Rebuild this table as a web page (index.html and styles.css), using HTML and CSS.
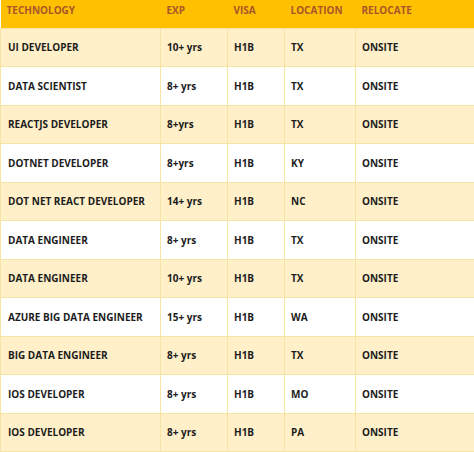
FILE: index.html
```html
<!DOCTYPE html>
<html>
<head>
<meta charset="utf-8">
<link rel="stylesheet" href="styles.css">
</head>
<body>
<table class="jobs">
  <colgroup>
    <col class="c-tech"><col class="c-exp"><col class="c-visa"><col class="c-loc"><col class="c-rel">
  </colgroup>
  <thead>
    <tr><th>TECHNOLOGY</th><th>EXP</th><th>VISA</th><th>LOCATION</th><th>RELOCATE</th></tr>
  </thead>
  <tbody>
    <tr><td>UI DEVELOPER</td><td>10+ yrs</td><td>H1B</td><td>TX</td><td>ONSITE</td></tr>
    <tr><td>DATA SCIENTIST</td><td>8+ yrs</td><td>H1B</td><td>TX</td><td>ONSITE</td></tr>
    <tr><td>REACTJS DEVELOPER</td><td>8+yrs</td><td>H1B</td><td>TX</td><td>ONSITE</td></tr>
    <tr><td>DOTNET DEVELOPER</td><td>8+yrs</td><td>H1B</td><td>KY</td><td>ONSITE</td></tr>
    <tr><td>DOT NET REACT DEVELOPER</td><td>14+ yrs</td><td>H1B</td><td>NC</td><td>ONSITE</td></tr>
    <tr><td>DATA ENGINEER</td><td>8+ yrs</td><td>H1B</td><td>TX</td><td>ONSITE</td></tr>
    <tr><td>DATA ENGINEER</td><td>10+ yrs</td><td>H1B</td><td>TX</td><td>ONSITE</td></tr>
    <tr><td>AZURE BIG DATA ENGINEER</td><td>15+ yrs</td><td>H1B</td><td>WA</td><td>ONSITE</td></tr>
    <tr><td>BIG DATA ENGINEER</td><td>8+ yrs</td><td>H1B</td><td>TX</td><td>ONSITE</td></tr>
    <tr><td>IOS DEVELOPER</td><td>8+ yrs</td><td>H1B</td><td>MO</td><td>ONSITE</td></tr>
    <tr><td>IOS DEVELOPER</td><td>8+ yrs</td><td>H1B</td><td>PA</td><td>ONSITE</td></tr>
  </tbody>
</table>
</body>
</html>
```

FILE: styles.css
```css
html, body {
  margin: 0;
  padding: 0;
  background: #ffffff;
}

.jobs {
  width: 474px;
  border-collapse: collapse;
  table-layout: fixed;
  font-family: "Open Sans", "Liberation Sans", sans-serif;
  font-weight: 700;
  font-size: 10px;
  color: #1c1c1c;
}

.c-tech { width: 160px; }
.c-exp { width: 67px; }
.c-visa { width: 57px; }
.c-loc { width: 71px; }
.c-rel { width: 119px; }

.jobs th {
  background: #ffc000;
  color: #a8562a;
  text-align: left;
  vertical-align: top;
  height: 28px;
  box-sizing: border-box;
  padding: 3px 0 0 6px;
  font-weight: 700;
  border: none;
}

.jobs td {
  height: 38.5px;
  box-sizing: border-box;
  padding: 0 0 0 6px;
  vertical-align: middle;
  white-space: nowrap;
  border: 1px solid #f6e3a6;
}

.jobs td:first-child { padding-left: 7px; }
.jobs td:last-child { border-right: none; }

.jobs tbody tr:nth-child(odd) td { background: #fff0c9; }
.jobs tbody tr:nth-child(even) td { background: #ffffff; }
```
